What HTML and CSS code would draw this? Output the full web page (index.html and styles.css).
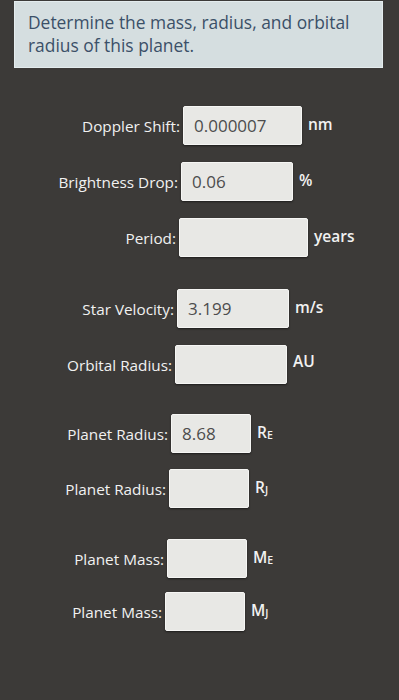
FILE: index.html
```html
<!DOCTYPE html>
<html lang="en">

<head>
    <meta charset="UTF-8">
    <meta name="viewport" content="width=device-width, initial-scale=1.0">
    <title>Planet Properties</title>
    <link rel="stylesheet" href="styles.css">
</head>

<body>
    <div class="prompt">
        Determine the mass, radius, and orbital radius of this planet.
    </div>

    <div class="form">
        <div class="row row-doppler">
            <label>Doppler Shift:</label>
            <input type="text" class="wide" value="0.000007">
            <span class="unit">nm</span>
        </div>
        <div class="row row-brightness">
            <label>Brightness Drop:</label>
            <input type="text" class="mid" value="0.06">
            <span class="unit">%</span>
        </div>
        <div class="row row-period">
            <label>Period:</label>
            <input type="text" class="widest">
            <span class="unit">years</span>
        </div>
        <div class="row row-velocity">
            <label>Star Velocity:</label>
            <input type="text" class="mid" value="3.199">
            <span class="unit">m/s</span>
        </div>
        <div class="row row-orbit">
            <label>Orbital Radius:</label>
            <input type="text" class="mid">
            <span class="unit unit-up">AU</span>
        </div>
        <div class="row row-radius-e">
            <label>Planet Radius:</label>
            <input type="text" class="small" value="8.68">
            <span class="unit">R<sub>E</sub></span>
        </div>
        <div class="row row-radius-j">
            <label>Planet Radius:</label>
            <input type="text" class="small">
            <span class="unit">R<sub>J</sub></span>
        </div>
        <div class="row row-mass-e">
            <label>Planet Mass:</label>
            <input type="text" class="small">
            <span class="unit">M<sub>E</sub></span>
        </div>
        <div class="row row-mass-j">
            <label>Planet Mass:</label>
            <input type="text" class="small">
            <span class="unit">M<sub>J</sub></span>
        </div>
    </div>
</body>

</html>
```

FILE: styles.css
```css
body {
    font-family: 'Open Sans', 'Liberation Sans', sans-serif;
    margin: 0;
    padding: 1px 0 0 0;
    background-color: #3c3a38;
    height: 699px;
    overflow: hidden;
}

.prompt {
    margin-left: 14px;
    width: 341px;
    padding: 9px 13px 10px 13px;
    background-color: #d5dee0;
    border: 1px solid #e4ecee;
    color: #3b5068;
    font-size: 17.4px;
    line-height: 23px;
}

.form {
    margin-top: 38px;
}

.row {
    display: flex;
    align-items: center;
    height: 39px;
    margin-top: 17px;
}

label {
    text-align: right;
    padding-right: 3px;
    color: #f1f1f1;
    font-size: 15.3px;
    box-sizing: border-box;
}

input {
    box-sizing: border-box;
    height: 39px;
    padding: 0 10px;
    border: 1px solid #f6f6f4;
    border-radius: 2px;
    background-color: #e8e8e5;
    box-shadow: 0 1px 2px rgba(0, 0, 0, 0.5);
    color: #4d4d4d;
    font-family: inherit;
    font-size: 17px;
    margin: 0;
}

input.widest {
    width: 129px;
}

input.wide {
    width: 119px;
}

input.mid {
    width: 112px;
}

input.small {
    width: 80px;
}

.unit {
    color: #f1f1f1;
    font-size: 15.5px;
    font-weight: 600;
    margin-left: 6px;
    margin-top: -3px;
}

.unit sub {
    font-size: 10.5px;
    vertical-align: -1px;
}

.unit-up {
    margin-top: -7px;
}

.row-doppler {
    margin-top: 0;
}

.row-doppler label {
    width: 183px;
}

.row-brightness label {
    width: 181px;
}

.row-period label {
    width: 179px;
}

.row-velocity {
    margin-top: 32px;
}

.row-velocity label {
    width: 177px;
}

.row-orbit label {
    width: 175px;
}

.row-radius-e {
    margin-top: 30px;
}

.row-radius-e label {
    width: 171px;
}

.row-radius-j {
    margin-top: 16px;
}

.row-radius-j label {
    width: 169px;
}

.row-mass-e {
    margin-top: 31px;
}

.row-mass-e label {
    width: 167px;
}

.row-mass-j {
    margin-top: 14px;
}

.row-mass-j label {
    width: 165px;
}
```
